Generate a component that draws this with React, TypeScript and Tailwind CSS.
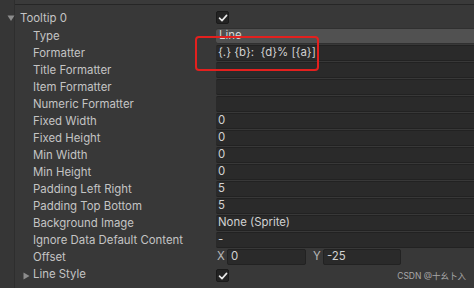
import React from "react";

const Check = () => (
  <div className="w-[13px] h-[13px] rounded-[2px] bg-[#232323] border border-[#1a1a1a] flex items-center justify-center">
    <svg width="10" height="10" viewBox="0 0 10 10">
      <path d="M1.5 5.2 L4 7.6 L8.6 2.4" fill="none" stroke="#e8e8e8" strokeWidth="1.6" strokeLinecap="round" strokeLinejoin="round" />
    </svg>
  </div>
);

const Field = ({ children }: { children?: React.ReactNode }) => (
  <div className="flex-1 h-[16px] bg-[#2a2a2a] border-y border-[#222222] rounded-l-[2px] flex items-center pl-[2px] text-[#d2d2d2] leading-none whitespace-pre">
    {children}
  </div>
);

const labels: [string, React.ReactNode][] = [
  ["Formatter", <Field>{"{.} {b}:  {d}% [{a}]"}</Field>],
  ["Title Formatter", <Field />],
  ["Item Formatter", <Field />],
  ["Numeric Formatter", <Field />],
  ["Fixed Width", <Field>0</Field>],
  ["Fixed Height", <Field>0</Field>],
  ["Min Width", <Field>0</Field>],
  ["Min Height", <Field>0</Field>],
  ["Padding Left Right", <Field>5</Field>],
  ["Padding Top Bottom", <Field>5</Field>],
  ["Background Image", <Field>None (Sprite)</Field>],
  ["Ignore Data Default Content", <Field>-</Field>],
];

export default function App() {
  return (
    <div
      className="relative w-[474px] h-[288px] overflow-hidden bg-[#383838] text-[11.4px] text-[#c4c4c4] flex"
      style={{ fontFamily: "Inter, 'Noto Sans', sans-serif" }}
    >
      <div className="w-[15px] h-full bg-[#363636] border-r border-[#2e2e2e]" />
      <div className="flex-1 flex flex-col">
        <div className="h-[5px] border-b border-[#262626] bg-[#3a3a3a]" />
        <div className="flex flex-col pt-[6px]">
          {/* Tooltip 0 */}
          <div className="relative h-[17px] flex items-center">
            <svg className="absolute left-[-8px] top-[4px]" width="8" height="7" viewBox="0 0 8 7">
              <path d="M0.5 0.5 L7.5 0.5 L4 6 Z" fill="#8c8c8c" />
            </svg>
            <div className="w-[201px] pl-[5px] leading-none pb-[2px]">Tooltip 0</div>
            <div className="self-start"><Check /></div>
          </div>
          {/* Type */}
          <div className="h-[17px] flex">
            <div className="w-[201px] pl-[18px] flex items-center leading-none">Type</div>
            <div className="flex-1 h-[16px] bg-[#515151] border-y border-[#303030] rounded-l-[3px] flex items-start pl-[3px] text-[#d6d6d6] leading-none pt-[1px]">
              Line
            </div>
          </div>
          {labels.map(([l, v]) => (
            <div key={l} className="h-[17px] flex">
              <div className="w-[201px] pl-[18px] flex items-center leading-none whitespace-nowrap">{l}</div>
              {v}
            </div>
          ))}
          {/* Offset */}
          <div className="h-[17px] flex">
            <div className="w-[201px] pl-[18px] flex items-center leading-none">Offset</div>
            <div className="flex-1 flex items-start text-[#d2d2d2]">
              <div className="w-[11px] h-[16px] flex items-center pl-[1px] text-[#b8b8b8] leading-none">X</div>
              <div className="w-[79px] h-[16px] bg-[#2a2a2a] border border-[#222222] rounded-[2px] flex items-center pl-[3px] leading-none">0</div>
              <div className="w-[17px] h-[16px] flex items-center pl-[7px] text-[#b8b8b8] leading-none">Y</div>
              <div className="w-[78px] h-[16px] bg-[#2a2a2a] border border-[#222222] rounded-[2px] flex items-center pl-[3px] leading-none">-25</div>
            </div>
          </div>
          {/* Line Style */}
          <div className="relative h-[17px] flex items-center">
            <svg className="absolute left-[8px] top-[6px]" width="7" height="8" viewBox="0 0 7 8">
              <path d="M0.5 0.5 L6.5 4 L0.5 7.5 Z" fill="#8c8c8c" />
            </svg>
            <div className="w-[201px] pl-[18px] leading-none pt-[1px]">Line Style</div>
            <div className="self-start pt-[3px]"><Check /></div>
          </div>
        </div>
      </div>
      {/* highlight box */}
      <div className="absolute left-[195px] top-[36px] w-[124px] h-[35px] border-[2.5px] border-[#e3201e] rounded-[4px]" />
      {/* watermark */}
      <div
        className="absolute right-[8px] top-[272px] text-[8.5px] text-[#a8a8a8] leading-none whitespace-nowrap"
        style={{ fontFamily: "Inter, 'Noto Sans CJK SC', sans-serif" }}
      >
        CSDN @十幺卜入
      </div>
    </div>
  );
}
